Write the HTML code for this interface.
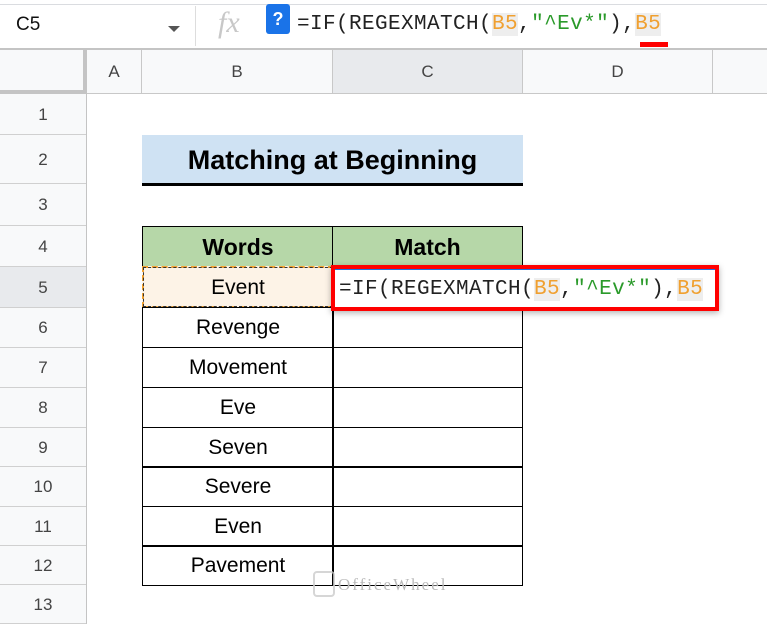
<!DOCTYPE html>
<html><head><meta charset="utf-8"><style>
*{margin:0;padding:0;box-sizing:border-box}
body{width:767px;height:624px;background:#fff;position:relative;overflow:hidden;font-family:"Liberation Sans",Arial,sans-serif}
.a{position:absolute}
.rn{position:absolute;left:0;width:86px;text-align:center;color:#444;font-size:17px;border-bottom:1px solid #d0d0d0;background:#f8f9fa}
.ch{position:absolute;top:50px;height:44px;line-height:44px;text-align:center;color:#444;font-size:17px;border-right:1px solid #c8c8c8;background:#f8f9fa;border-bottom:1px solid #c8c8c8}
.cell{position:absolute;text-align:center;font-size:21px;color:#000;border:1.5px solid #000}
.mono{font-family:"Liberation Mono","DejaVu Sans Mono",monospace;white-space:nowrap}
</style></head><body>
<div class="a" style="left:0;top:0;width:767px;height:5px;background:#fff;border-bottom:1px solid #dadce0"></div>
<div class="a" style="left:0;top:48px;width:767px;height:2px;background:#c4c4c4"></div>
<div class="a" style="left:16px;top:14px;font-size:19px;color:#111">C5</div>
<div class="a" style="left:168px;top:26px;width:0;height:0;border-left:6px solid transparent;border-right:6px solid transparent;border-top:6px solid #555"></div>
<div class="a" style="left:195px;top:6px;width:1px;height:40px;background:#ddd"></div>
<div class="a" style="left:218px;top:6px;font-family:'Liberation Serif',serif;font-style:italic;font-size:30px;color:#c8c8c8">fx</div>
<div class="a" style="left:266px;top:4px;width:24px;height:30px;background:#1a73e8;border-radius:3px;color:#fff;font-weight:bold;text-align:center;font-size:18px;line-height:30px">?</div>
<div class="a mono" style="left:297px;top:13px;font-size:21px;color:#222;letter-spacing:0.4px">=IF(REGEXMATCH(<span style="color:#f0a030;background:#eee">B5</span>,<span style="color:#2a9a2a">"^Ev*"</span>),<span style="color:#f0a030;background:#eee">B5</span></div>
<div class="a" style="left:640px;top:42px;width:28px;height:5px;background:#f00"></div>

<div class="a" style="left:0;top:50px;width:87px;height:44px;background:#f8f9fa;border-right:4px solid #c4c4c4;border-bottom:4px solid #c4c4c4"></div>
<div class="ch" style="left:87px;width:55px">A</div>
<div class="ch" style="left:142px;width:191px">B</div>
<div class="ch" style="left:333px;width:190px;background:#e8eaed">C</div>
<div class="ch" style="left:523px;width:190px">D</div>
<div class="ch" style="left:713px;width:60px"></div>
<div class="a" style="left:86px;top:94px;width:1px;height:530px;background:#c4c4c4"></div>

<div class="rn" style="top:94px;height:41px;line-height:41px">1</div>
<div class="rn" style="top:135px;height:49px;line-height:49px">2</div>
<div class="rn" style="top:184px;height:42px;line-height:42px">3</div>
<div class="rn" style="top:226px;height:41px;line-height:41px">4</div>
<div class="rn" style="top:267px;height:41px;line-height:41px;background:#e8eaed">5</div>
<div class="rn" style="top:308px;height:40px;line-height:40px">6</div>
<div class="rn" style="top:348px;height:40px;line-height:40px">7</div>
<div class="rn" style="top:388px;height:40px;line-height:40px">8</div>
<div class="rn" style="top:428px;height:39px;line-height:39px">9</div>
<div class="rn" style="top:467px;height:40px;line-height:40px">10</div>
<div class="rn" style="top:507px;height:39px;line-height:39px">11</div>
<div class="rn" style="top:546px;height:39px;line-height:39px">12</div>
<div class="rn" style="top:585px;height:39px;line-height:39px">13</div>

<div class="a" style="left:142px;top:135px;width:381px;height:51px;background:#cfe2f3;border-bottom:3px solid #000;text-align:center;font-weight:bold;font-size:27px;line-height:50px">Matching at Beginning</div>

<div class="cell" style="left:142px;top:226px;width:192px;height:42px;line-height:40px;background:#b6d7a8;font-size:23px;font-weight:bold">Words</div>
<div class="cell" style="left:332px;top:226px;width:191px;height:42px;line-height:40px;background:#b6d7a8;font-size:23px;font-weight:bold">Match</div>

<div class="cell" style="left:142px;top:266px;width:192px;height:42px;line-height:40px;background:#fdf3e7;border:2px dashed #f0a030;outline:1px dashed #333;outline-offset:-2px">Event</div>

<div class="cell" style="left:142px;top:307px;width:192px;height:41px;line-height:39px">Revenge</div>
<div class="cell" style="left:142px;top:347px;width:192px;height:41px;line-height:39px">Movement</div>
<div class="cell" style="left:142px;top:387px;width:192px;height:41px;line-height:39px">Eve</div>
<div class="cell" style="left:142px;top:427px;width:192px;height:41px;line-height:39px">Seven</div>
<div class="cell" style="left:142px;top:466px;width:192px;height:41px;line-height:39px">Severe</div>
<div class="cell" style="left:142px;top:506px;width:192px;height:41px;line-height:39px">Even</div>
<div class="cell" style="left:142px;top:545px;width:192px;height:41px;line-height:39px">Pavement</div>
<div class="cell" style="left:332px;top:307px;width:191px;height:41px"></div>
<div class="cell" style="left:332px;top:347px;width:191px;height:41px"></div>
<div class="cell" style="left:332px;top:387px;width:191px;height:41px"></div>
<div class="cell" style="left:332px;top:427px;width:191px;height:41px"></div>
<div class="cell" style="left:332px;top:466px;width:191px;height:41px"></div>
<div class="cell" style="left:332px;top:506px;width:191px;height:41px"></div>
<div class="cell" style="left:332px;top:545px;width:191px;height:41px"></div>

<div class="a" style="left:331px;top:265px;width:388px;height:46px;border:4px solid #f00;background:#fff;box-shadow:0 2px 6px rgba(0,0,0,.3)">
<div class="a" style="left:0;top:0;width:380px;height:1px;background:#1a73e8"></div>
<div class="a mono" style="left:4px;top:9px;font-size:21px;color:#222;letter-spacing:0.4px">=IF(REGEXMATCH(<span style="color:#f0a030;background:#eee">B5</span>,<span style="color:#2a9a2a">"^Ev*"</span>),<span style="color:#f0a030;background:#eee">B5</span></div>
</div>

<div class="a" style="left:313px;top:571px;width:22px;height:26px;border:2px solid #ccc;border-radius:4px;opacity:.8"></div>
<div class="a" style="left:338px;top:575px;font-family:'Liberation Serif',serif;font-size:17px;color:#bbb;letter-spacing:2px">OfficeWheel</div>
</body></html>
